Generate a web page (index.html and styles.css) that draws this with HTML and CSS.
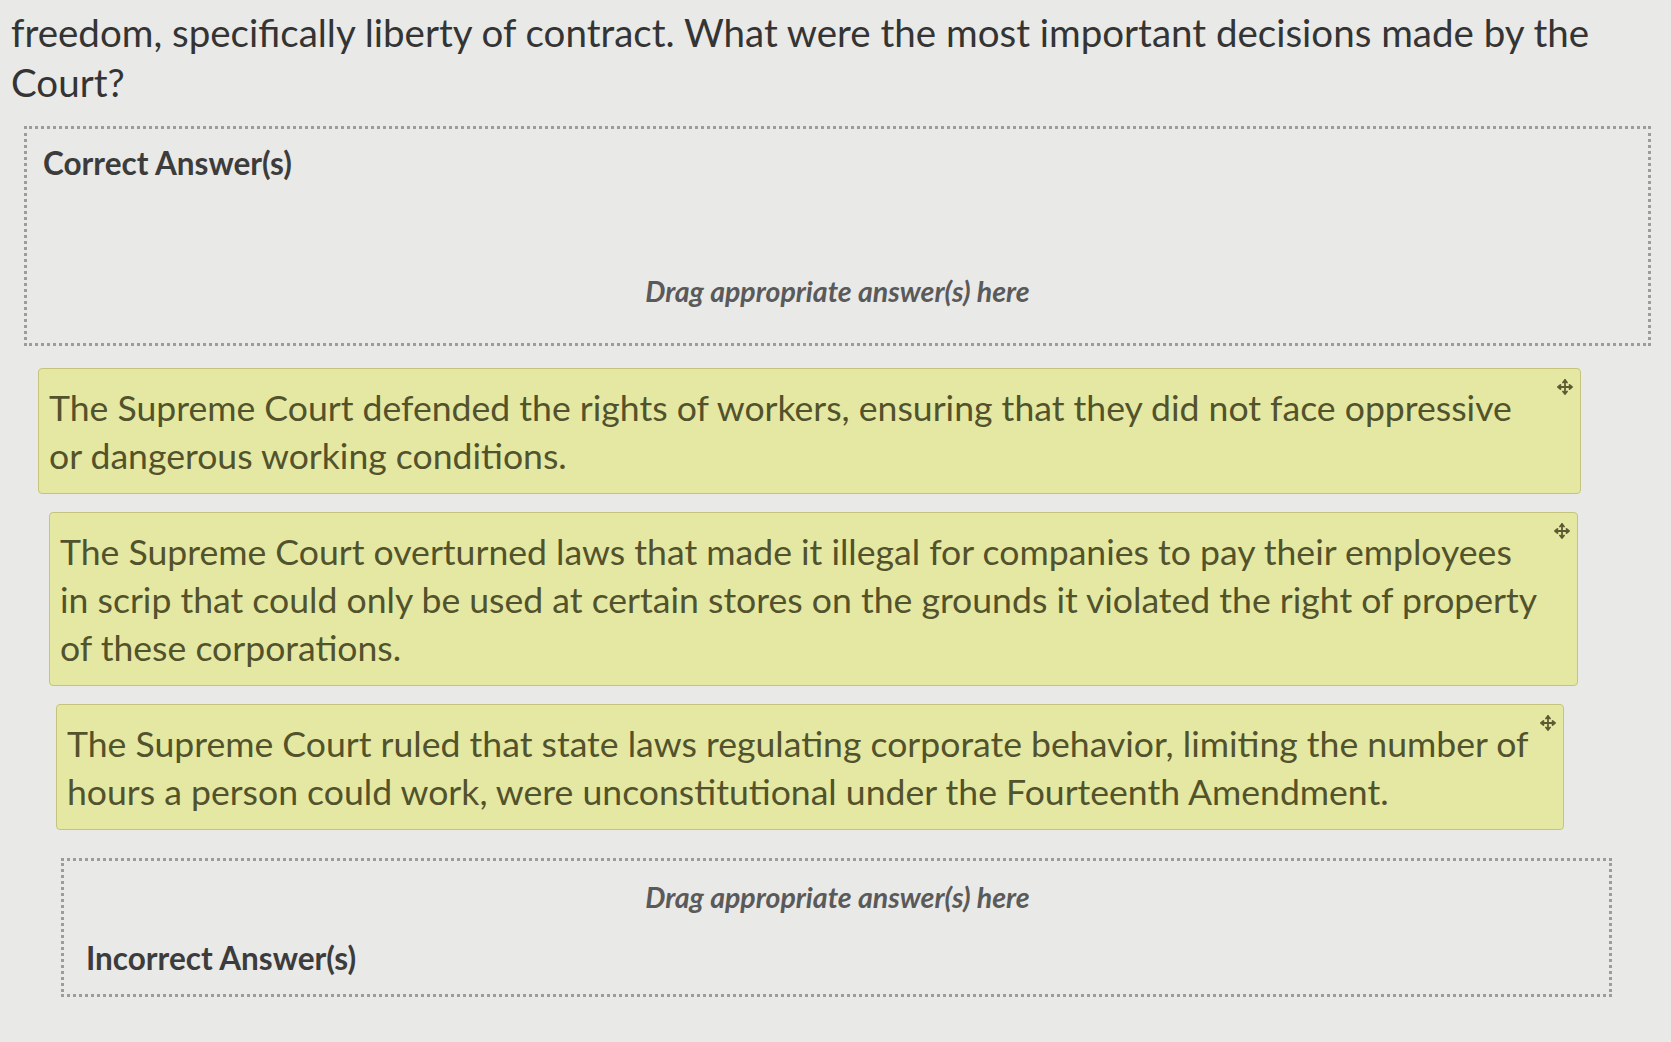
FILE: index.html
```html
<!DOCTYPE html>
<html lang="en">

<head>
    <meta charset="UTF-8">
    <meta name="viewport" content="width=device-width, initial-scale=1.0">
    <title>Question</title>
    <link rel="stylesheet" href="styles.css">
</head>

<body>
    <p class="question">freedom, specifically liberty of contract. What were the most important decisions made by the Court?</p>

    <div class="zone zone-correct">
        <div class="zone-label">Correct Answer(s)</div>
        <div class="zone-hint">Drag appropriate answer(s) here</div>
    </div>

    <div class="answers">
        <div class="answer">
            <span class="answer-text">The Supreme Court defended the rights of workers, ensuring that they did not face oppressive or dangerous working conditions.</span>
            <svg class="move" viewBox="0 0 16 16"><path d="M8 1v14M1 8h14M8 1 6 3.5M8 1l2 2.5M8 15l-2-2.5M8 15l2-2.5M1 8l2.5-2M1 8l2.5 2M15 8l-2.5-2M15 8l-2.5 2"/></svg>
        </div>
        <div class="answer">
            <span class="answer-text">The Supreme Court overturned laws that made it illegal for companies to pay their employees in scrip that could only be used at certain stores on the grounds it violated the right of property of these corporations.</span>
            <svg class="move" viewBox="0 0 16 16"><path d="M8 1v14M1 8h14M8 1 6 3.5M8 1l2 2.5M8 15l-2-2.5M8 15l2-2.5M1 8l2.5-2M1 8l2.5 2M15 8l-2.5-2M15 8l-2.5 2"/></svg>
        </div>
        <div class="answer">
            <span class="answer-text">The Supreme Court ruled that state laws regulating corporate behavior, limiting the number of hours a person could work, were unconstitutional under the Fourteenth Amendment.</span>
            <svg class="move" viewBox="0 0 16 16"><path d="M8 1v14M1 8h14M8 1 6 3.5M8 1l2 2.5M8 15l-2-2.5M8 15l2-2.5M1 8l2.5-2M1 8l2.5 2M15 8l-2.5-2M15 8l-2.5 2"/></svg>
        </div>
    </div>

    <div class="zone zone-incorrect">
        <div class="zone-hint">Drag appropriate answer(s) here</div>
        <div class="zone-label">Incorrect Answer(s)</div>
    </div>
</body>

</html>
```

FILE: styles.css
```css
body {
    margin: 0;
    background-color: #e9e9e7;
    font-family: Lato, "Open Sans", sans-serif;
    color: #333;
}

.question {
    margin: 0;
    padding: 7px 60px 0 11px;
    font-size: 38.5px;
    line-height: 50px;
    color: #343434;
}

.zone {
    border: 3px dotted #9c9c9c;
    display: flex;
    flex-direction: column;
    box-sizing: border-box;
}

.zone-label {
    font-size: 31.5px;
    line-height: 38px;
    font-weight: bold;
    color: #3c3c3c;
}

.zone-hint {
    font-size: 28.5px;
    line-height: 34px;
    font-weight: bold;
    font-style: italic;
    color: #5a5a5a;
    text-align: center;
}

.zone-correct {
    margin: 19px 20px 0 24px;
    height: 220px;
    padding: 15px 16px 0 16px;
}

.zone-correct .zone-hint {
    margin-top: 92px;
}

.zone-incorrect {
    margin: 28px 59px 0 61px;
    height: 139px;
    padding: 19px 20px 0 22px;
}

.zone-incorrect .zone-label {
    margin-top: 25px;
}

.answers {
    display: flex;
    flex-direction: column;
    gap: 18px;
    margin-top: 22px;
}

.answer {
    display: flex;
    align-items: flex-start;
    background-color: #e5e8a2;
    border: 1px solid #c6c47c;
    border-radius: 4px;
    padding: 15px 7px 13px 10px;
    color: #52522c;
    font-size: 35.6px;
    line-height: 48px;
}

.answer:nth-child(1) {
    margin: 0 90px 0 38px;
}

.answer:nth-child(2) {
    margin: 0 93px 0 49px;
}

.answer:nth-child(3) {
    margin: 0 107px 0 56px;
}

.answer-text {
    flex: 1;
    padding-right: 10px;
}

.move {
    width: 16px;
    height: 16px;
    margin-top: -5px;
    fill: none;
    stroke: #5b5a33;
    stroke-width: 1.8;
    stroke-linecap: round;
}
```
